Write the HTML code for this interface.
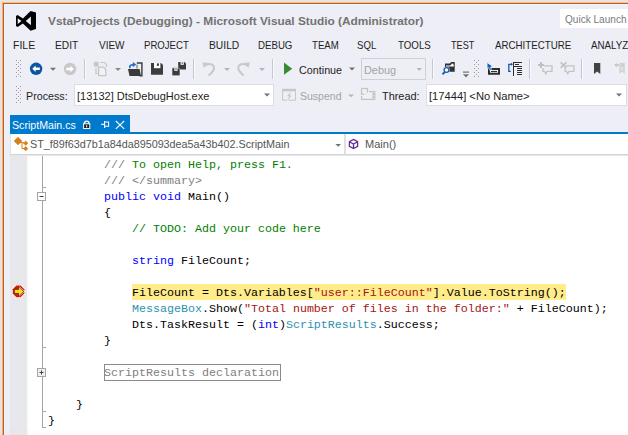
<!DOCTYPE html>
<html><head><meta charset="utf-8">
<style>
html,body{margin:0;padding:0;}
body{width:628px;height:435px;overflow:hidden;position:relative;background:#eeeef6;font-family:"Liberation Sans",sans-serif;}
.a{position:absolute;}
.ui{position:absolute;font-size:11.5px;color:#1e1e1e;white-space:nowrap;line-height:14px;transform-origin:0 0;}
.code{position:absolute;margin-top:1px;left:104px;font-family:"Liberation Mono",monospace;font-size:11.67px;line-height:16px;white-space:pre;color:#000;}
.g{color:#008000}.gr{color:#808080}.b{color:#0000ff}.t{color:#2b91af}.s{color:#a31515}
svg.ov{position:absolute;left:0;top:0;}
</style></head><body>
<!-- outer strip + orange border -->
<div class="a" style="left:0;top:0;width:628px;height:2px;background:#f0e2d8"></div>
<div class="a" style="left:0;top:0;width:2px;height:435px;background:#f0e2d8"></div>
<div class="a" style="left:2px;top:2px;width:626px;height:1px;background:#f8c190"></div>
<div class="a" style="left:2px;top:2px;width:1px;height:433px;background:#f3ab78"></div>
<div class="a" style="left:3px;top:3px;width:625px;height:1px;background:#aa602d"></div>
<div class="a" style="left:3px;top:3px;width:1px;height:432px;background:#b8622c"></div>
<div class="a" style="left:4px;top:4px;width:624px;height:1px;background:#f4f6fc"></div>
<div class="a" style="left:4px;top:4px;width:1px;height:431px;background:#eef3fb"></div>

<!-- Quick launch box -->
<div class="a" style="left:560px;top:9px;width:68px;height:19px;background:#fff"></div>

<!-- combos -->
<div class="a" style="left:361px;top:58px;width:64px;height:21px;border:1px solid #cfcfd4;box-sizing:border-box;width:65px;height:22px"></div>
<div class="a" style="left:74px;top:84px;width:200px;height:22px;background:#fff;border:1px solid #dcdce2;box-sizing:border-box"></div>
<div class="a" style="left:426px;top:84px;width:201px;height:22px;background:#fff;border:1px solid #dcdce2;box-sizing:border-box"></div>

<!-- tab -->
<div class="a" style="left:10px;top:115px;width:120px;height:17px;background:#007acc"></div>
<div class="a" style="left:10px;top:132px;width:618px;height:2px;background:#007acc"></div>

<!-- nav bar -->
<div class="a" style="left:10px;top:134px;width:618px;height:20px;background:#fff"></div>
<div class="a" style="left:10px;top:154px;width:618px;height:1px;background:#d4d4d9"></div>
<div class="a" style="left:10px;top:155px;width:618px;height:1px;background:#e6e6ea"></div>
<div class="a" style="left:10px;top:134px;width:1px;height:20px;background:#e2e2e6"></div>
<div class="a" style="left:344px;top:134px;width:2px;height:20px;background:#e0e0e4"></div>

<!-- editor -->
<div class="a" style="left:10px;top:156px;width:17px;height:279px;background:#e7e8ec"></div>
<div class="a" style="left:27px;top:156px;width:2px;height:279px;background:#fbfbfc"></div>
<div class="a" style="left:29px;top:156px;width:599px;height:279px;background:#fff"></div>
<div class="a" style="left:4px;top:430px;width:624px;height:5px;background:rgba(230,220,200,0.05)"></div>

<!-- text -->
<div class="ui" style="left:47.6px;top:14px;font-size:11.5px;font-weight:bold;color:#737373;transform:scaleX(1.03)">VstaProjects (Debugging) - Microsoft Visual Studio (Administrator)</div>
<div class="ui" style="left:565px;top:12px;color:#7a7a7a;transform:scaleX(0.875)">Quick Launch</div>
<div class="ui" style="left:13.09px;top:38px;transform:scaleX(0.913)">FILE</div>
<div class="ui" style="left:54.61px;top:38px;transform:scaleX(0.888)">EDIT</div>
<div class="ui" style="left:98.8px;top:38px;transform:scaleX(0.869)">VIEW</div>
<div class="ui" style="left:143.67px;top:38px;transform:scaleX(0.834)">PROJECT</div>
<div class="ui" style="left:208.51px;top:38px;transform:scaleX(0.894)">BUILD</div>
<div class="ui" style="left:257.66px;top:38px;transform:scaleX(0.841)">DEBUG</div>
<div class="ui" style="left:312px;top:38px;transform:scaleX(0.839)">TEAM</div>
<div class="ui" style="left:357.46px;top:38px;transform:scaleX(0.836)">SQL</div>
<div class="ui" style="left:398.3px;top:38px;transform:scaleX(0.845)">TOOLS</div>
<div class="ui" style="left:451px;top:38px;transform:scaleX(0.793)">TEST</div>
<div class="ui" style="left:494.6px;top:38px;transform:scaleX(0.846)">ARCHITECTURE</div>
<div class="ui" style="left:591.4px;top:38px;transform:scaleX(0.85)">ANALYZE</div>

<div class="ui" style="left:298.86px;top:63px;transform:scaleX(0.936)">Continue</div>
<div class="ui" style="left:363.96px;top:63px;color:#a2a4a5;transform:scaleX(0.944)">Debug</div>
<div class="ui" style="left:25.87px;top:89px;transform:scaleX(0.93)">Process:</div>
<div class="ui" style="left:76.74px;top:89px;transform:scaleX(0.958)">[13132] DtsDebugHost.exe</div>
<div class="ui" style="left:299.89px;top:89px;color:#a2a4a5;transform:scaleX(0.914)">Suspend</div>
<div class="ui" style="left:382px;top:89px;transform:scaleX(0.949)">Thread:</div>
<div class="ui" style="left:429.03px;top:89px;transform:scaleX(0.971)">[17444] &lt;No Name&gt;</div>
<div class="ui" style="left:12.48px;top:118px;color:#fff;transform:scaleX(0.924)">ScriptMain.cs</div>
<div class="ui" style="left:30.4px;top:137px;color:#555;transform:scaleX(0.937)">ST_f89f63d7b1a84da895093dea5a43b402.ScriptMain</div>
<div class="ui" style="left:364.54px;top:137px;color:#555;transform:scaleX(0.958)">Main()</div>

<!-- code -->
<div class="code" style="top:156px"><span class="gr">/// </span><span class="g">To open Help, press F1.</span></div>
<div class="code" style="top:172px"><span class="gr">/// &lt;/summary&gt;</span></div>
<div class="code" style="top:188px"><span class="b">public</span> <span class="b">void</span> Main()</div>
<div class="code" style="top:204px">{</div>
<div class="code" style="top:220px">    <span class="g">// TODO: Add your code here</span></div>
<div class="code" style="top:252px">    <span class="b">string</span> FileCount;</div>
<div class="a" style="left:132px;top:284px;width:434px;height:16px;background:#ffec8b"></div>
<div class="code" style="top:284px">    FileCount = Dts.Variables[<span class="s">"user::FileCount"</span>].Value.ToString();</div>
<div class="code" style="top:300px">    <span class="t">MessageBox</span>.Show(<span class="s">"Total number of files in the folder:"</span> + FileCount);</div>
<div class="code" style="top:316px">    Dts.TaskResult = (<span class="b">int</span>)<span class="t">ScriptResults</span>.Success;</div>
<div class="code" style="top:332px">}</div>
<div class="a" style="left:104px;top:364px;width:177px;height:17px;border:1px solid #8a8a8a;box-sizing:border-box"></div>
<div class="code" style="top:364px;color:#808080">ScriptResults declaration</div>
<div class="code" style="top:396px;left:76px">}</div>
<div class="code" style="top:412px;left:48px">}</div>

<!-- icon overlay -->
<svg class="ov" width="628" height="435" viewBox="0 0 628 435">
<!-- VS logo -->
<path transform="translate(16,11)" fill="#000" fill-rule="evenodd" d="M14.6 0.1 L20 1.5 L20 18 L14.6 19.8 L6.9 12.4 L1.6 16 L0 15 L0 5 L1.6 4 L6.9 7.6 Z M1.7 7.3 L5.5 10 L1.7 12.9 Z M14.9 5.6 L14.9 14.3 L9.8 10 Z"/>

<!-- grips -->
<g fill="#9a9a9a">
<rect x="16" y="60" width="1" height="1"/><rect x="20" y="60" width="1" height="1"/><rect x="18" y="62" width="1" height="1"/>
<rect x="16" y="64" width="1" height="1"/><rect x="20" y="64" width="1" height="1"/><rect x="18" y="66" width="1" height="1"/>
<rect x="16" y="68" width="1" height="1"/><rect x="20" y="68" width="1" height="1"/><rect x="18" y="70" width="1" height="1"/>
<rect x="16" y="72" width="1" height="1"/><rect x="20" y="72" width="1" height="1"/><rect x="18" y="74" width="1" height="1"/>
<rect x="16" y="76" width="1" height="1"/><rect x="20" y="76" width="1" height="1"/>

<rect x="16" y="86" width="1" height="1"/><rect x="20" y="86" width="1" height="1"/><rect x="18" y="88" width="1" height="1"/>
<rect x="16" y="90" width="1" height="1"/><rect x="20" y="90" width="1" height="1"/><rect x="18" y="92" width="1" height="1"/>
<rect x="16" y="94" width="1" height="1"/><rect x="20" y="94" width="1" height="1"/><rect x="18" y="96" width="1" height="1"/>
<rect x="16" y="98" width="1" height="1"/><rect x="20" y="98" width="1" height="1"/><rect x="18" y="100" width="1" height="1"/>
<rect x="16" y="102" width="1" height="1"/><rect x="20" y="102" width="1" height="1"/>

<rect x="474" y="60" width="1" height="1"/><rect x="478" y="60" width="1" height="1"/><rect x="476" y="62" width="1" height="1"/>
<rect x="474" y="64" width="1" height="1"/><rect x="478" y="64" width="1" height="1"/><rect x="476" y="66" width="1" height="1"/>
<rect x="474" y="68" width="1" height="1"/><rect x="478" y="68" width="1" height="1"/><rect x="476" y="70" width="1" height="1"/>
<rect x="474" y="72" width="1" height="1"/><rect x="478" y="72" width="1" height="1"/><rect x="476" y="74" width="1" height="1"/>
<rect x="474" y="76" width="1" height="1"/><rect x="478" y="76" width="1" height="1"/>
</g>

<!-- separators -->
<g fill="#c4c6d6">
<rect x="84" y="59" width="1" height="20"/>
<rect x="193" y="59" width="1" height="20"/>
<rect x="272" y="59" width="1" height="20"/>
<rect x="432" y="59" width="1" height="20"/>
<rect x="529" y="59" width="1" height="20"/>
<rect x="581" y="59" width="1" height="20"/>
</g>
<g fill="#fafafc">
<rect x="85" y="59" width="1" height="20"/>
<rect x="194" y="59" width="1" height="20"/>
<rect x="273" y="59" width="1" height="20"/>
<rect x="433" y="59" width="1" height="20"/>
<rect x="530" y="59" width="1" height="20"/>
<rect x="582" y="59" width="1" height="20"/>
</g>

<!-- back / forward -->
<circle cx="36.1" cy="68.8" r="6.2" fill="#0a56a3"/>
<path d="M32.3 68.8 L35.6 65.5 L35.6 67.6 L39.8 67.6 L39.8 70 L35.6 70 L35.6 72.1 Z" fill="#fff"/>
<circle cx="70" cy="69" r="6.2" fill="#c9c9cc"/>
<path d="M73.8 69 L70.5 65.7 L70.5 67.8 L66.3 67.8 L66.3 70.2 L70.5 70.2 L70.5 72.3 Z" fill="#fff"/>

<!-- dropdown arrows -->
<g fill="#717171">
<path d="M50 67.7 L56 67.7 L53 70.7 Z"/>
<path d="M115 68 L121 68 L118 71 Z" fill="#8a8a8a"/>
<path d="M349 67.5 L355 67.5 L352 70.5 Z"/>
<path d="M264 93.5 L270 93.5 L267 96.5 Z"/>
<path d="M616 93.5 L622 93.5 L619 96.5 Z"/>
<path d="M335.4 144 L341 144 L338.2 146.8 Z"/>
</g>
<g fill="#b4b4b8">
<path d="M224 68 L230 68 L227 71 Z"/>
<path d="M259 68 L265 68 L262 71 Z"/>
<path d="M416.5 68 L422 68 L419.2 70.8 Z"/>
<path d="M348 94.5 L354 94.5 L351 97.3 Z"/>
</g>

<!-- new project (disabled) -->
<g fill="none" stroke="#c6c6c6" stroke-width="1.2">
<path d="M94 62 L98.5 66.5 M98.5 62 L94 66.5 M96.2 61.5 V67 M93.5 64.2 H99"/>
<path d="M100.5 62.5 H104.5 L106.5 64.5 V67"/>
<path d="M96 68 V73.5 H97.5"/>
</g>
<path d="M98.6 67.2 H103.5 L105.8 69.5 V75.6 H98.6 Z" fill="#f2f2f4" stroke="#c6c6c6" stroke-width="1.3"/>

<!-- open -->
<path d="M136.8 63 H141.9 V75.9 H139.5" fill="none" stroke="#3a3a3a" stroke-width="1.4"/>
<path d="M128 69 H139.6 L141 75.9 H129.5 Z" fill="#3a3a3a"/>
<path d="M137 68.5 V64.6" stroke="#3a3a3a" stroke-width="0.8"/>
<path d="M130.2 68.3 C129 66.5 130 64.8 133.5 64.6" fill="none" stroke="#1e6fc8" stroke-width="1.6"/>
<path d="M132.8 62 L136.3 64.6 L132.8 67.2 Z" fill="#1e6fc8"/>

<!-- save -->
<path d="M151 63 H161 L163 65 V74.8 H151 Z" fill="#3c3c3c"/>
<rect x="154" y="63" width="6.4" height="5.2" fill="#fff"/>
<rect x="156.9" y="63.4" width="2" height="2.4" fill="#3c3c3c"/>
<!-- save all -->
<path d="M178.2 62 H184.5 L186 63.5 V69.6 H178.2 Z" fill="#3c3c3c"/>
<rect x="180.6" y="62" width="3.2" height="2.8" fill="#fff"/><rect x="181.7" y="62.3" width="1" height="1.6" fill="#3c3c3c"/>
<path d="M172 67.8 H178.5 L180 69.3 V75.7 H172 Z" fill="#3c3c3c" stroke="#eeeef6" stroke-width="0.6"/>
<rect x="174.4" y="68" width="3.2" height="2.8" fill="#fff"/><rect x="175.5" y="68.3" width="1" height="1.6" fill="#3c3c3c"/>

<!-- undo / redo (disabled) -->
<g fill="none" stroke="#c8c8c8" stroke-width="2">
<path d="M204.5 66 C208 62.8 214.5 63.5 214 68.5 C213.6 71.5 211 73.5 208.5 75.5"/>
<path d="M247.8 66 C244.3 62.8 237.8 63.5 238.3 68.5 C238.7 71.5 241.3 73.5 243.8 75.5"/>
</g>
<path d="M202.5 62.5 L208 62.8 L203.6 68 Z" fill="#c8c8c8"/>
<path d="M249.8 62.5 L244.3 62.8 L248.7 68 Z" fill="#c8c8c8"/>

<!-- continue -->
<path d="M284 62.6 L292.2 68.7 L284 74.8 Z" fill="#388a34"/>

<!-- find in files -->
<path d="M445 63.4 H449.6 L451.4 62 H454.7 V71.8 H445 Z" fill="#333"/>
<path d="M446 65.6 H450.2 L451.3 64.6 H453.8 V66.4 H446 Z" fill="#fff"/>
<circle cx="452.3" cy="64.3" r="0.9" fill="#fff"/>
<circle cx="446.5" cy="70" r="3.2" fill="#eeeef6"/>
<circle cx="446.5" cy="70" r="2.4" fill="#fff" stroke="#0e5cb8" stroke-width="1.3"/>
<path d="M444.9 71.8 L442.5 74.4" stroke="#0e5cb8" stroke-width="1.9"/>
<!-- overflow -->
<rect x="463" y="71.5" width="6" height="1.2" fill="#717171"/>
<path d="M463 74.2 L469 74.2 L466 77.4 Z" fill="#717171"/>

<!-- icon: cursor rect -->
<path d="M488 68 H500 V74.8 H488 Z M490 70 V72.8 H498 V70 Z" fill="#2e2e2e" fill-rule="evenodd"/>
<rect x="491" y="71" width="6" height="1" fill="#2e2e2e"/>
<path d="M487 62.6 L492.6 66.4 L490.6 67 L491.5 69.6 L489.8 70.2 L488.9 67.6 L487.3 68.9 Z" fill="#0e5cb8" stroke="#fff" stroke-width="0.6"/>
<!-- icon: bracket list -->
<path d="M511 64.3 H508.8 V71.4 H510.8" fill="none" stroke="#0e5cb8" stroke-width="1.3"/>
<path d="M510.5 64.3 H512" stroke="#0e5cb8" stroke-width="1.3"/>
<path d="M511 62.8 L513 64.3 L511 65.8 Z" fill="#0e5cb8"/>
<g fill="#2e2e2e">
<rect x="513" y="62" width="1" height="14"/>
<rect x="513" y="62" width="9" height="1"/>
<rect x="515" y="64" width="4" height="1"/>
<rect x="513" y="66" width="9" height="1"/>
<rect x="517" y="68" width="5" height="1"/>
<rect x="517" y="70" width="5" height="1"/>
<rect x="517" y="72" width="5" height="1"/>
<rect x="517" y="74" width="5" height="1"/>
</g>

<!-- comments (disabled) -->
<g fill="none" stroke="#c4c4c4" stroke-width="1.3">
<path d="M544 65.8 H552 V71.4 H547 L545.8 73.8 L544.6 71.4 H543 V68"/>
<path d="M566 65.8 H574 V71.4 H569 L567.8 73.8 L566.6 71.4 H565 V68"/>
</g>
<path d="M538 65.1 H544 M541 62.1 V68.1" stroke="#c0c0c0" stroke-width="2"/>
<path d="M560.6 62.4 L566.4 67.8 M566.4 62.4 L560.6 67.8" stroke="#c0c0c0" stroke-width="1.6"/>

<!-- bookmark -->
<path d="M594 63 H600.3 V74 L597.15 71.5 L594 74 Z" fill="#424242"/>
<!-- prev bookmark (disabled) -->
<path d="M619.3 63 H624.7 V73.7 L622 71.6 L619.3 73.7 Z" fill="#d0d0d2"/>
<rect x="620.6" y="67" width="2.8" height="3.6" fill="#e2e2e6"/>
<path d="M613.8 65.1 L617 62.4 V64.1 H620.5 V66.1 H617 V67.8 Z" fill="#c4c4c4" stroke="#eeeef6" stroke-width="0.5"/>

<!-- suspend (disabled) -->
<rect x="282.6" y="89.4" width="12.8" height="10.8" fill="#f0f0f2" stroke="#c6c6c6" stroke-width="1"/>
<rect x="282.1" y="88.9" width="13.8" height="2.4" fill="#c6c6c6"/>
<path d="M290.2 92.4 L286.8 96.3 H289.2 L287.2 101 L291.6 95.4 H289.2 L291 92.4 Z" fill="#c6c6c6"/>
<rect x="287" y="100" width="1.6" height="1" fill="#f0f0f2"/>
<!-- thread icon (disabled) -->
<rect x="361.6" y="88.5" width="5.8" height="5.8" fill="#f2f2f4" stroke="#c4c4c4" stroke-width="1.3"/>
<path d="M361.6 96 V99.3 H374.6 V91.6 H369" fill="#f0f0f2" stroke="#c4c4c4" stroke-width="1.3"/>
<rect x="372.4" y="91" width="2.8" height="8.9" fill="#c4c4c4"/>
<g fill="#f4f4f6"><rect x="373.3" y="92.2" width="1" height="1"/><rect x="373.3" y="95.2" width="1" height="1"/><rect x="373.3" y="98" width="1" height="1"/></g>
<!-- tab icons -->
<path d="M84.4 124 V123.4 A2.3 2.3 0 0 1 89 123.4 V124" fill="none" stroke="#fff" stroke-width="1.4"/>
<rect x="83.6" y="123.8" width="6.2" height="4.7" fill="#1e1e1e" stroke="#fff" stroke-width="1"/>
<rect x="86.2" y="125.2" width="1" height="2.2" fill="#fff"/>
<g stroke="#fff" stroke-width="1.1" fill="none">
<path d="M101 124.3 H104.5"/>
<path d="M104.6 121 V128"/>
<path d="M104.6 122 H108.6 V126.2 H104.6"/>
<path d="M115.8 121 L124.2 128.8 M124.2 121 L115.8 128.8"/>
</g>

<!-- class icon -->
<g fill="#d67f1f" stroke="#d67f1f" stroke-width="0.8" stroke-linejoin="round">
<path d="M18 137.2 L21.8 141 L18 144.8 L14.2 141 Z"/>
<path d="M25.7 141.1 L27.8 143.2 L25.7 145.3 L23.6 143.2 Z"/>
<path d="M25.7 146.6 L27.8 148.7 L25.7 150.8 L23.6 148.7 Z"/>
</g>
<path d="M20 142.6 H24 M22 142.6 V148.6 H24" fill="none" stroke="#d67f1f" stroke-width="1"/>
<!-- method cube -->
<g fill="none" stroke="#652d90" stroke-width="1.3">
<path d="M353.5 139.4 L357.6 141.6 V146.3 L353.5 148.5 L349.4 146.3 V141.6 Z"/>
<path d="M349.8 142 L353.5 144.1 L357.2 142 M353.5 144.1 V148"/>
</g>

<!-- outlining -->
<g fill="#a5a5a5">
<rect x="42" y="156" width="1" height="36"/>
<rect x="42" y="187" width="4" height="1"/>
<rect x="42" y="201" width="1" height="146"/>
<rect x="42" y="347" width="4" height="1"/>
<rect x="42" y="348" width="1" height="20"/>
<rect x="42" y="377" width="1" height="50"/>
<rect x="42" y="411" width="4" height="1"/>
<rect x="42" y="427" width="4" height="1"/>
</g>
<rect x="37.5" y="192.5" width="8" height="8" fill="#fff" stroke="#a5a5a5" stroke-width="1"/>
<rect x="39.5" y="196" width="4" height="1" fill="#424242"/>
<rect x="37.5" y="368.5" width="8" height="8" fill="#eeeeee" stroke="#a5a5a5" stroke-width="1"/>
<rect x="39.5" y="372" width="4" height="1" fill="#424242"/>
<rect x="41" y="370.5" width="1" height="4" fill="#424242"/>

<!-- breakpoint / current statement -->
<path d="M16 284.9 H21 L25 288.9 V293.9 L21 297.9 H16 L12 293.9 V288.9 Z" fill="#fff"/>
<path d="M16.3 285.6 H20.7 L24.3 289.2 V293.6 L20.7 297.2 H16.3 L12.7 293.6 V289.2 Z" fill="#e51400"/>
<path d="M14.3 289.4 H18.6 V286.4 L23.8 291.4 L18.6 296.4 V293.4 H14.3 Z" fill="#ffd820" stroke="#333" stroke-width="0.8"/>
<path d="M19.2 286.6 L24.6 291.4 L19.2 296.2" fill="none" stroke="#fff" stroke-width="0.6"/>
</svg>
</body></html>
